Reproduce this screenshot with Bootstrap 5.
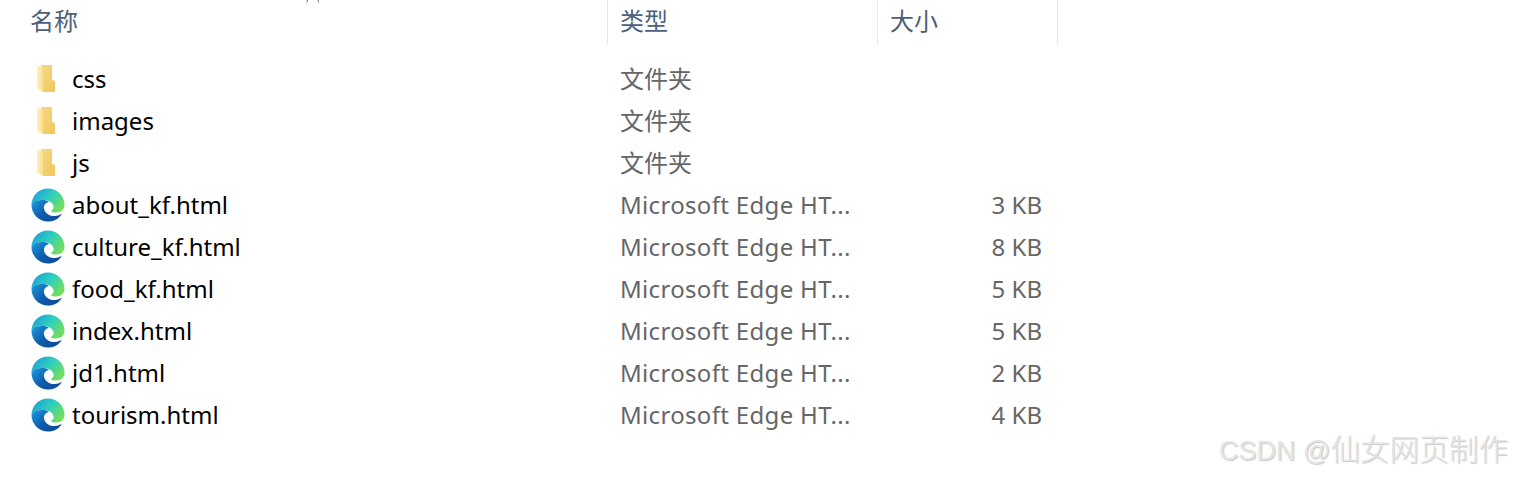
<!doctype html>
<html lang="zh"><head><meta charset="utf-8"><title>文件列表</title>
<link rel="stylesheet" href="https://cdn.jsdelivr.net/npm/bootstrap@5.3.0/dist/css/bootstrap.min.css">
<style>
html,body{height:477px;overflow:hidden;background:#fff}
body{font-family:"Noto Sans","Noto Sans CJK SC",sans-serif;font-size:24px;position:relative}
.fl-head{height:45px}
.fl-head>div{height:45px;padding-bottom:6px;display:flex;align-items:center;color:#4c607a;font-size:24px;font-family:"Noto Sans CJK SC",sans-serif;border-right:1px solid #e8e8e8}
.c1{width:608px;padding-left:30px;flex:none}
.c2{width:270px;padding-left:12px;flex:none}
.c3{width:180px;padding-left:12px;flex:none}
.fl-body{padding-top:13px}
.fl-row{height:42px;display:flex;align-items:center;line-height:1}
.fl-name{display:flex;align-items:center;width:608px;padding-left:31px;flex:none;color:#000}
.fl-ico{width:41px;flex:none;display:flex}
.fl-type{width:270px;padding-left:12px;flex:none;color:#666;white-space:nowrap;letter-spacing:.32px}
.fl-type.zh{font-family:"Noto Sans CJK SC",sans-serif;letter-spacing:0;padding-bottom:2px}
.fl-size{width:164px;flex:none;text-align:right;color:#666}
.wm{position:absolute;left:1219px;top:428px;font-size:27px;line-height:40px;color:#e4e4e4;white-space:nowrap;font-family:"Liberation Sans",sans-serif;text-shadow:1px 1px 1px #c8c8c8}
.wm-zh{font-family:"Noto Sans CJK SC",sans-serif;font-size:29.6px;font-weight:300}
.crumbs{position:absolute;left:306px;top:0}
</style></head><body>
<svg width="0" height="0" class="d-block position-absolute"><defs>
<linearGradient id="gb" x1="0" y1="0" x2="1" y2="1"><stop offset="0" stop-color="#f6d985"/><stop offset="1" stop-color="#f0c65a"/></linearGradient>
<linearGradient id="gf" x1="0" y1="0" x2="1" y2="0"><stop offset="0" stop-color="#fff1bb"/><stop offset="1" stop-color="#fbdf8c"/></linearGradient>
<symbol id="folder" viewBox="0 0 34 34"><path d="M10 3h11v15l3 1v11H12z" fill="url(#gb)"/><path d="M6 3.500l6 2.500v24l-6-3.500z" fill="url(#gf)"/></symbol>
<linearGradient id="e1" x1="0" y1="0" x2="1" y2=".6"><stop offset="0" stop-color="#1b93dc"/><stop offset=".55" stop-color="#2ccfc0"/><stop offset="1" stop-color="#72de5e"/></linearGradient>
<linearGradient id="e2" x1="0" y1="0" x2="1" y2=".7"><stop offset="0" stop-color="#1f9be2"/><stop offset=".55" stop-color="#0d5cab"/><stop offset="1" stop-color="#0b4c96"/></linearGradient>
<symbol id="edge" viewBox="0 0 34 34">
<path d="M.5 17A16.500 16.500 0 0 1 33.500 17C33.500 21.500 30 24.500 25 24.500C22.500 24.500 20.500 24 20 23C22 22 23 20 22.500 18C21.500 14.500 17.500 12 13 12C7.500 12 2.500 13 .5 17Z" fill="url(#e1)"/>
<path d="M.5 17C2 13 7 12 12 12C14 12 16.500 12.500 18 14C14.500 14.500 12.500 17.500 13 20.500C14 25.500 19 28.500 24 28C26.500 27.800 29 27 31 25.500C28 31 23 33.500 17 33.500C8 33.500 .5 26 .5 17Z" fill="url(#e2)"/>
</symbol>
</defs></svg>
<svg class="crumbs" width="14" height="3"><path d="M1.500 0L.8 2.500M12 0l.8 2.500" stroke="#777" stroke-width="1" fill="none"/></svg>
<div class="fl-head d-flex">
<div class="c1">名称</div><div class="c2">类型</div><div class="c3">大小</div>
</div>
<div class="fl-body">
<div class="fl-row"><div class="fl-name"><div class="fl-ico"><svg width="34" height="34"><use href="#folder"/></svg></div><span>css</span></div><div class="fl-type zh">文件夹</div></div>
<div class="fl-row"><div class="fl-name"><div class="fl-ico"><svg width="34" height="34"><use href="#folder"/></svg></div><span>images</span></div><div class="fl-type zh">文件夹</div></div>
<div class="fl-row"><div class="fl-name"><div class="fl-ico"><svg width="34" height="34"><use href="#folder"/></svg></div><span>js</span></div><div class="fl-type zh">文件夹</div></div>
<div class="fl-row"><div class="fl-name"><div class="fl-ico"><svg width="34" height="34"><use href="#edge"/></svg></div><span>about_kf.html</span></div><div class="fl-type">Microsoft Edge HT...</div><div class="fl-size">3 KB</div></div>
<div class="fl-row"><div class="fl-name"><div class="fl-ico"><svg width="34" height="34"><use href="#edge"/></svg></div><span>culture_kf.html</span></div><div class="fl-type">Microsoft Edge HT...</div><div class="fl-size">8 KB</div></div>
<div class="fl-row"><div class="fl-name"><div class="fl-ico"><svg width="34" height="34"><use href="#edge"/></svg></div><span>food_kf.html</span></div><div class="fl-type">Microsoft Edge HT...</div><div class="fl-size">5 KB</div></div>
<div class="fl-row"><div class="fl-name"><div class="fl-ico"><svg width="34" height="34"><use href="#edge"/></svg></div><span>index.html</span></div><div class="fl-type">Microsoft Edge HT...</div><div class="fl-size">5 KB</div></div>
<div class="fl-row"><div class="fl-name"><div class="fl-ico"><svg width="34" height="34"><use href="#edge"/></svg></div><span>jd1.html</span></div><div class="fl-type">Microsoft Edge HT...</div><div class="fl-size">2 KB</div></div>
<div class="fl-row"><div class="fl-name"><div class="fl-ico"><svg width="34" height="34"><use href="#edge"/></svg></div><span>tourism.html</span></div><div class="fl-type">Microsoft Edge HT...</div><div class="fl-size">4 KB</div></div>
</div>
<div class="wm">CSDN @<span class="wm-zh">仙女网页制作</span></div>
<script src="https://cdn.jsdelivr.net/npm/bootstrap@5.3.0/dist/js/bootstrap.bundle.min.js"></script>
</body></html>
